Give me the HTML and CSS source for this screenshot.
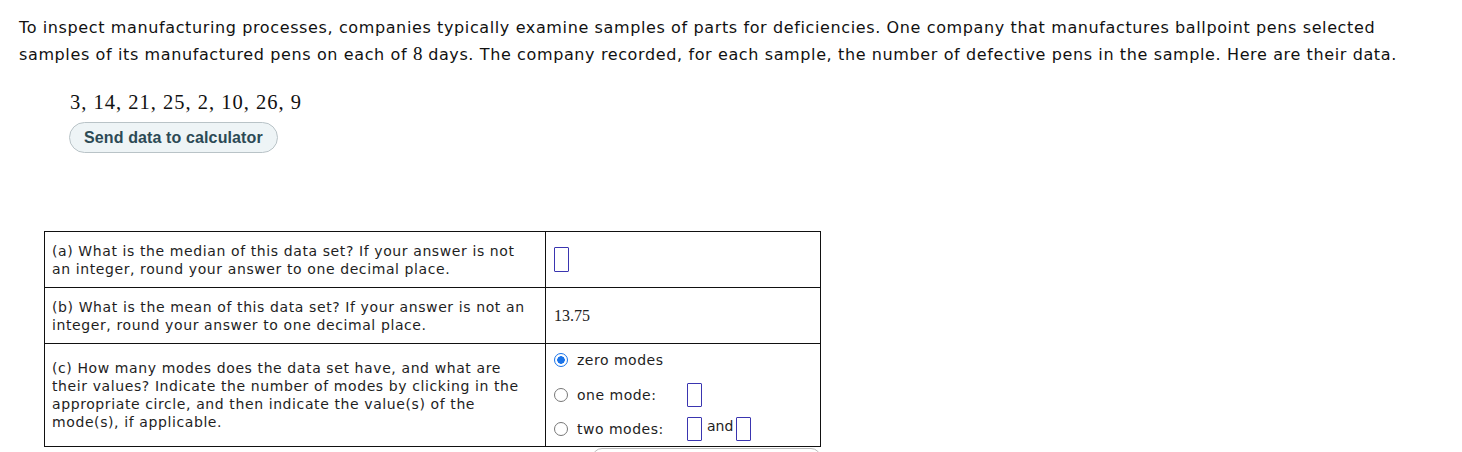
FILE: index.html
```html
<!DOCTYPE html>
<html>
<head>
<meta charset="utf-8">
<link rel="stylesheet" href="styles.css">
</head>
<body>
<div class="page">
  <p class="intro">To inspect manufacturing processes, companies typically examine samples of parts for deficiencies. One company that manufactures ballpoint pens selected samples of its manufactured pens on each of <span class="num">8</span> days. The company recorded, for each sample, the number of defective pens in the sample. Here are their data.</p>
  <div class="data">
    <div class="values">3, 14, 21, 25, 2, 10, 26, 9</div>
    <button class="send">Send data to calculator</button>
  </div>
  <table class="qa">
    <tr class="row-a">
      <td class="q">(a) What is the median of this data set? If your answer is not an integer, round your answer to one decimal place.</td>
      <td class="a"><span class="box"></span></td>
    </tr>
    <tr class="row-b">
      <td class="q">(b) What is the mean of this data set? If your answer is not an integer, round your answer to one decimal place.</td>
      <td class="a"><span class="val">13.75</span></td>
    </tr>
    <tr class="row-c">
      <td class="q">(c) How many modes does the data set have, and what are their values? Indicate the number of modes by clicking in the appropriate circle, and then indicate the value(s) of the mode(s), if applicable.</td>
      <td class="a ac">
        <div class="opt"><span class="radio on"></span><span class="lbl">zero modes</span></div>
        <div class="opt"><span class="radio"></span><span class="lbl w">one mode:</span><span class="box"></span></div>
        <div class="opt"><span class="radio"></span><span class="lbl w">two modes:</span><span class="box"></span><span class="and">and</span><span class="box"></span></div>
      </td>
    </tr>
  </table>
  <div class="below"><div class="pill"></div></div>
</div>
</body>
</html>
```

FILE: styles.css
```css
html, body { margin: 0; padding: 0; background: #fff; }
body { font-family: "DejaVu Sans", Verdana, sans-serif; color: #111; overflow: hidden; height: 452px; }
.page { padding: 15px 0 0 19px; }
.intro { margin: 0; font-size: 16px; line-height: 26px; width: 1405px; letter-spacing: 0.62px; }
.num { font-family: "Liberation Serif", serif; font-size: 19px; letter-spacing: 0; }
.data { padding-left: 51px; margin-top: 22px; }
.values { font-family: "Liberation Serif", serif; font-size: 20.5px; line-height: 24px; letter-spacing: 1.0px; color: #111; }
.send { display: block; margin-top: 8px; margin-left: -1px; height: 31px; padding: 0 14px; border: 1px solid #b9c3c7; border-radius: 16px; background: #eef4f6; color: #2c4a55; font-family: "Liberation Sans", Arial, sans-serif; font-weight: bold; font-size: 16px; letter-spacing: 0.12px; }
.qa { margin-top: 78px; margin-left: 25px; border-collapse: collapse; width: 777px; font-size: 14px; letter-spacing: 0.6px; color: #1e1e1e; }
.qa td { border: 1px solid #111; padding: 0 7px; vertical-align: middle; }
.q { width: 486px; line-height: 18px; }
.row-a td, .row-b td { height: 55px; }
.row-c td { height: 102px; }
.a { padding-left: 8px !important; }
.box { display: inline-block; box-sizing: border-box; width: 15px; height: 25px; border: 1.5px solid #3a35b0; border-radius: 1px; vertical-align: middle; }
.val { font-family: "Liberation Serif", serif; font-size: 16px; letter-spacing: 0; color: #222; }
.ac { vertical-align: top !important; }
.opt { display: flex; align-items: center; height: 24px; margin-bottom: 10.5px; letter-spacing: 0.5px; }
.opt:first-child { margin-top: 4px; }
.opt .box { height: 24px; }
.opt:last-child { margin-bottom: 0; }
.radio { width: 14px; height: 14px; border: 1px solid #777; border-radius: 50%; margin-right: 9px; box-sizing: border-box; flex: none; }
.radio.on { border: 1.5px solid #1a73e8; background: radial-gradient(circle, #1a73e8 0 3.5px, #fff 4px); }
.lbl.w { width: 110px; }
.and { margin: 0 3px 0 5px; align-self: flex-start; line-height: 18px; letter-spacing: 0; }
.below { margin-left: 573px; }
.pill { width: 227px; height: 20px; border: 1px solid #bbb; border-radius: 10px; margin-top: 1px; }
```
